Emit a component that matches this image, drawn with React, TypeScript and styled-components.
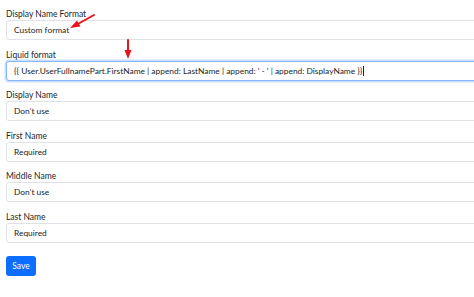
import React from 'react';
import styled, { createGlobalStyle } from 'styled-components';

const GlobalStyle = createGlobalStyle`
  html, body {
    margin: 0;
    padding: 0;
    background: #fff;
    overflow: hidden;
  }
  body {
    font-family: Lato, "Noto Sans", sans-serif;
    color: #212529;
  }
`;

const Page = styled.div`
  position: relative;
  width: 520px;
  padding: 9px 0 0 6px;
`;

const FieldGroup = styled.div`
  display: flex;
  flex-direction: column;
  margin-bottom: 9.6px;
`;

const Label = styled.label`
  font-size: 8.5px;
  line-height: 11px;
  color: #212529;
`;

const Control = styled.div<{ $focused?: boolean }>`
  box-sizing: border-box;
  height: 20px;
  width: 100%;
  display: flex;
  align-items: center;
  padding: 0 7px;
  font-size: 8.4px;
  white-space: nowrap;
  background: #fff;
  border: 1px solid ${(p) => (p.$focused ? '#86b7fe' : '#dee2e6')};
  border-radius: 3px;
  box-shadow: ${(p) => (p.$focused ? '0 0 0 1.5px rgba(13, 110, 253, 0.22)' : 'none')};
`;

const Caret = styled.span`
  display: inline-block;
  width: 1px;
  height: 10px;
  margin-left: 1px;
  background: #212529;
`;

const SaveButton = styled.button`
  box-sizing: border-box;
  height: 20px;
  width: 30px;
  padding: 0;
  margin-top: -0.6px;
  border: none;
  border-radius: 3px;
  background: #0d6efd;
  color: #fff;
  font-family: Lato, "Noto Sans", sans-serif;
  font-size: 8.5px;
  cursor: pointer;
`;

const Arrows = styled.svg`
  position: absolute;
  left: 0;
  top: 0;
  pointer-events: none;
`;

const fields = [
  { label: 'Display Name Format', value: 'Custom format' },
  {
    label: 'Liquid format',
    value: "{{ User.UserFullnamePart.FirstName | append: LastName | append: ' - ' | append: DisplayName }}",
    focused: true,
  },
  { label: 'Display Name', value: 'Don\u2019t use' },
  { label: 'First Name', value: 'Required' },
  { label: 'Middle Name', value: 'Don\u2019t use' },
  { label: 'Last Name', value: 'Required' },
];

export default function App() {
  return (
    <>
      <GlobalStyle />
      <Page>
        {fields.map((f) => (
          <FieldGroup key={f.label}>
            <Label>{f.label}</Label>
            <Control $focused={f.focused}>
              {f.value}
              {f.focused && <Caret />}
            </Control>
          </FieldGroup>
        ))}
        <SaveButton type="button">Save</SaveButton>
        <Arrows width="474" height="297" viewBox="0 0 474 297">
          <g stroke="#e8141b" strokeWidth="2" strokeLinecap="round" fill="#e8141b">
            <line x1="94" y1="15" x2="76" y2="25" />
            <polygon points="70,28 77,20.5 80.5,26.5" stroke="none" />
            <line x1="128" y1="40" x2="128" y2="51" />
            <polygon points="128,59 124.5,50 131.5,50" stroke="none" />
          </g>
        </Arrows>
      </Page>
    </>
  );
}
